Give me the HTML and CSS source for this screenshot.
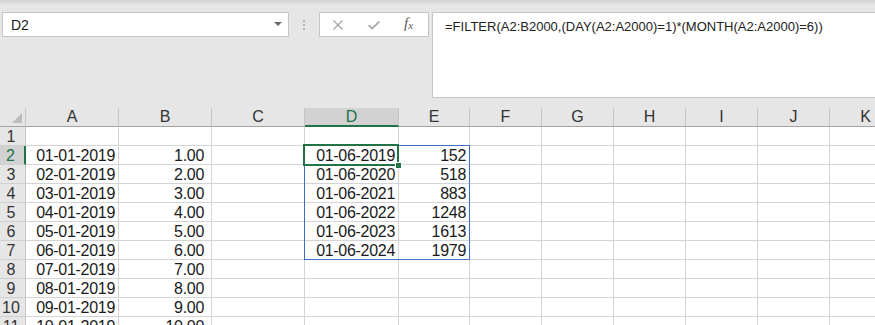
FILE: index.html
```html
<!DOCTYPE html>
<html>
<head>
<meta charset="utf-8">
<title>Sheet</title>
<link rel="stylesheet" href="styles.css">
</head>
<body>
<div class="top">
	<div class="namebox"><span>D2</span><span class="caret"></span></div>
	<div class="grip"><i></i><i></i><i></i></div>
	<div class="fxbtns">
		<svg class="ico-x" width="10" height="10" viewBox="0 0 10 10"><path d="M0.5 0.5 L9.5 9.5 M9.5 0.5 L0.5 9.5" stroke="#a6a6a6" stroke-width="1.3" fill="none"/></svg>
		<svg class="ico-ok" width="12" height="9" viewBox="0 0 12 9"><path d="M0.7 4.2 L4.2 7.6 L11.3 0.7" stroke="#a6a6a6" stroke-width="1.8" fill="none"/></svg>
		<span class="fx">f<sub>x</sub></span>
	</div>
	<div class="formula">=FILTER(A2:B2000,(DAY(A2:A2000)=1)*(MONTH(A2:A2000)=6))</div>
</div>
<div class="sheet">
	<div class="row head">
		<div class="corner"><span class="tri"></span></div>
		<div>A</div><div>B</div><div>C</div><div class="sel">D</div><div>E</div><div>F</div><div>G</div><div>H</div><div>I</div><div>J</div><div>K</div>
	</div>
	<div class="row">
		<div class="rh">1</div><div></div><div></div><div></div><div></div><div></div><div></div><div></div><div></div><div></div><div></div><div></div>
	</div>
	<div class="row">
		<div class="rh sel">2</div><div>01-01-2019</div><div class="pad">1.00</div><div></div><div>01-06-2019</div><div>152</div><div></div><div></div><div></div><div></div><div></div><div></div>
	</div>
	<div class="row">
		<div class="rh">3</div><div>02-01-2019</div><div class="pad">2.00</div><div></div><div>01-06-2020</div><div>518</div><div></div><div></div><div></div><div></div><div></div><div></div>
	</div>
	<div class="row">
		<div class="rh">4</div><div>03-01-2019</div><div class="pad">3.00</div><div></div><div>01-06-2021</div><div>883</div><div></div><div></div><div></div><div></div><div></div><div></div>
	</div>
	<div class="row">
		<div class="rh">5</div><div>04-01-2019</div><div class="pad">4.00</div><div></div><div>01-06-2022</div><div>1248</div><div></div><div></div><div></div><div></div><div></div><div></div>
	</div>
	<div class="row">
		<div class="rh">6</div><div>05-01-2019</div><div class="pad">5.00</div><div></div><div>01-06-2023</div><div>1613</div><div></div><div></div><div></div><div></div><div></div><div></div>
	</div>
	<div class="row">
		<div class="rh">7</div><div>06-01-2019</div><div class="pad">6.00</div><div></div><div>01-06-2024</div><div>1979</div><div></div><div></div><div></div><div></div><div></div><div></div>
	</div>
	<div class="row">
		<div class="rh">8</div><div>07-01-2019</div><div class="pad">7.00</div><div></div><div></div><div></div><div></div><div></div><div></div><div></div><div></div><div></div>
	</div>
	<div class="row">
		<div class="rh">9</div><div>08-01-2019</div><div class="pad">8.00</div><div></div><div></div><div></div><div></div><div></div><div></div><div></div><div></div><div></div>
	</div>
	<div class="row">
		<div class="rh">10</div><div>09-01-2019</div><div class="pad">9.00</div><div></div><div></div><div></div><div></div><div></div><div></div><div></div><div></div><div></div>
	</div>
	<div class="row">
		<div class="rh">11</div><div>10-01-2019</div><div class="pad">10.00</div><div></div><div></div><div></div><div></div><div></div><div></div><div></div><div></div><div></div>
	</div>
	<div class="range"></div>
	<div class="active"><span class="handle"></span></div>
</div>
</body>
</html>
```

FILE: styles.css
```css
body {
	margin: 0;
	background: linear-gradient(#d2d2d2, #e6e6e6 5px) #e6e6e6;
	font-family: "Liberation Sans", Arial, sans-serif;
	color: #1a1a1a;
	overflow: hidden;
	width: 875px;
	height: 325px;
}
.top {
	display: flex;
	align-items: flex-start;
	padding: 12px 0 0 2px;
	height: 96px;
}
.namebox {
	width: 287px;
	height: 25px;
	background: #fff;
	border: 1px solid #c6c6c6;
	display: flex;
	align-items: center;
	justify-content: space-between;
	padding: 0 6px 0 8px;
	box-sizing: border-box;
	font-size: 14px;
}
.caret {
	width: 0;
	height: 0;
	border-left: 4px solid transparent;
	border-right: 4px solid transparent;
	border-top: 4px solid #6a6a6a;
	margin-top: -2px;
}
.grip {
	width: 30px;
	height: 25px;
	display: flex;
	flex-direction: column;
	align-items: center;
	justify-content: center;
	gap: 2px;
}
.grip i {
	width: 2px;
	height: 2px;
	background: #b4b4b4;
}
.fxbtns {
	width: 110px;
	height: 25px;
	box-sizing: border-box;
	background: #fff;
	border: 1px solid #c6c6c6;
	display: flex;
	align-items: center;
	padding: 0 0 0 13px;
}
.ico-ok {
	margin-left: 25px;
	margin-top: 2px;
}
.fx {
	font-family: "Liberation Serif", serif;
	font-style: italic;
	font-size: 15px;
	color: #5a5a5a;
	margin-left: 24px;
	margin-top: -3px;
}
.fx sub {
	font-size: 11px;
	vertical-align: -1px;
}
.formula {
	margin-left: 3px;
	flex: 1;
	height: 86px;
	box-sizing: border-box;
	background: #fff;
	border: 1px solid #c6c6c6;
	border-right: none;
	padding: 6px 0 0 12px;
	font-size: 13px;
	color: #222;
}
.sheet {
	position: relative;
	background: #fff;
}
.row {
	display: grid;
	grid-template-columns: 26px 93px 93px 93px 94px 71px 72px 72px 72px 72px 72px 72px;
	height: 19px;
}
.row > div {
	box-sizing: border-box;
	border-right: 1px solid #d4d4d4;
	border-bottom: 1px solid #d4d4d4;
	font-size: 16px;
	letter-spacing: -0.3px;
	line-height: 19px;
	text-align: right;
	padding-right: 3px;
	white-space: nowrap;
	overflow: hidden;
}
.row > div.pad {
	padding-right: 7px;
}
.head > div {
	background: #e6e6e6;
	text-align: center;
	padding: 0;
	letter-spacing: 0;
	border-right-color: #c4c4c4;
	border-bottom: 1px solid #a3a3a3;
	color: #333;
	line-height: 18px;
}
.head > div.sel {
	background: #d2d2d2;
	color: #217346;
	border-bottom: 2px solid #217346;
}
.corner {
	position: relative;
}
.tri {
	position: absolute;
	right: 3px;
	bottom: 3px;
	width: 0;
	height: 0;
	border-left: 10px solid transparent;
	border-bottom: 10px solid #bcbcbc;
}
.row > div.rh {
	background: #e6e6e6;
	text-align: center;
	padding: 0 3px 0 0;
	letter-spacing: 0;
	border-right-color: #c4c4c4;
	border-bottom-color: #d0d0d0;
	color: #333;
}
.row > div.rh.sel {
	background: #d2d2d2;
	color: #217346;
	border-right: 2px solid #217346;
}
.range {
	position: absolute;
	left: 304px;
	top: 37px;
	width: 164px;
	height: 113px;
	border: 1px solid #3e6fc6;
}
.active {
	position: absolute;
	left: 303px;
	top: 36px;
	width: 92px;
	height: 18px;
	border: 2px solid #217346;
}
.handle {
	position: absolute;
	right: -5px;
	bottom: -5px;
	width: 5px;
	height: 5px;
	background: #217346;
	border: 1px solid #fff;
}
```
